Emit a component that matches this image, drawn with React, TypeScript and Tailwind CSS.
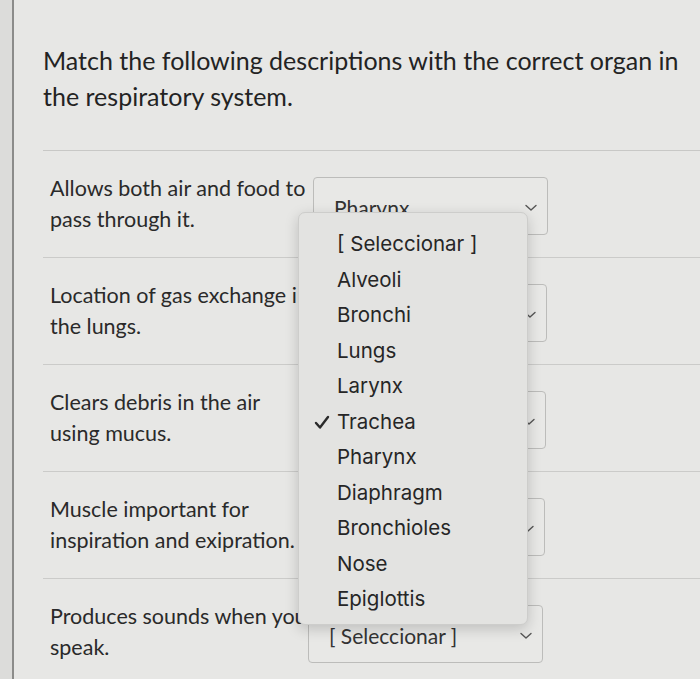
const rows = [
  { text: "Allows both air and food to pass through it.", value: "Pharynx", shift: "ml-0" },
  { text: "Location of gas exchange in the lungs.", value: "[ Seleccionar ]", shift: "-ml-[1px]" },
  { text: "Clears debris in the air using mucus.", value: "[ Seleccionar ]", shift: "-ml-[2px]" },
  { text: "Muscle important for inspiration and exipration.", value: "[ Seleccionar ]", shift: "-ml-[3px]" },
  { text: "Produces sounds when you speak.", value: "[ Seleccionar ]", shift: "-ml-[5px]" },
];

const options = [
  "[ Seleccionar ]",
  "Alveoli",
  "Bronchi",
  "Lungs",
  "Larynx",
  "Trachea",
  "Pharynx",
  "Diaphragm",
  "Bronchioles",
  "Nose",
  "Epiglottis",
];

function Chevron() {
  return (
    <svg width="12" height="8" viewBox="0 0 12 8" className="shrink-0">
      <path d="M1 1.5 L6 6 L11 1.5" fill="none" stroke="#555" strokeWidth="1.4" strokeLinecap="round" strokeLinejoin="round" />
    </svg>
  );
}

function CheckMark() {
  return (
    <svg width="16" height="15" viewBox="0 0 16 15" className="absolute left-[15px] top-[11px]">
      <path d="M2 8 L6 12.5 L14 2" fill="none" stroke="#2a2a2a" strokeWidth="2.4" strokeLinecap="round" strokeLinejoin="round" />
    </svg>
  );
}

function SelectBox({ value, shift }: { value: string; shift: string }) {
  return (
    <div className={`${shift} mt-[4px] flex h-[58px] w-[235px] shrink-0 items-center justify-between rounded-[4px] border border-[#bcbcba] bg-[#e8e8e6] pl-[20px] pr-[10px] pt-[4px]`}>
      <span className="text-[21px] text-[#333]">{value}</span>
      <Chevron />
    </div>
  );
}

function Dropdown() {
  return (
    <div className="absolute left-[298px] top-[212px] w-[230px] rounded-[7px] border border-[#cdcdcb] bg-[#e3e3e1] pb-[7px] pt-[13px] shadow-[0_4px_14px_rgba(0,0,0,0.18)] font-['Inter',sans-serif]">
      {options.map((o) => (
        <div key={o} className="relative pl-[38px] text-[20.5px] leading-[35.5px] text-[#262626]">
          {o === "Trachea" && <CheckMark />}
          {o}
        </div>
      ))}
    </div>
  );
}

export default function App() {
  return (
    <div className="relative h-[679px] w-[700px] overflow-hidden bg-[#dcdcda] pl-[12px] font-['Lato',sans-serif]">
      <div className="h-full border-l-2 border-[#8c8c8a] bg-[#e7e7e5] pl-[29px]">
        <h1 className="pt-[42px] text-[25px] leading-[36px] text-[#232323]">
          Match the following descriptions with the correct organ in the respiratory system.
        </h1>

        <div className="mt-[36px] border-t border-[#c8c8c6]">
          {rows.map((r, i) => (
            <div key={i} className="flex items-center border-b border-[#cbcbc9] py-[22px] pl-[7px]">
              <p className="w-[263px] shrink-0 text-[21.5px] leading-[31px] text-[#2a2a2a]">{r.text}</p>
              <SelectBox value={r.value} shift={r.shift} />
            </div>
          ))}
        </div>
      </div>
      <Dropdown />
    </div>
  );
}
